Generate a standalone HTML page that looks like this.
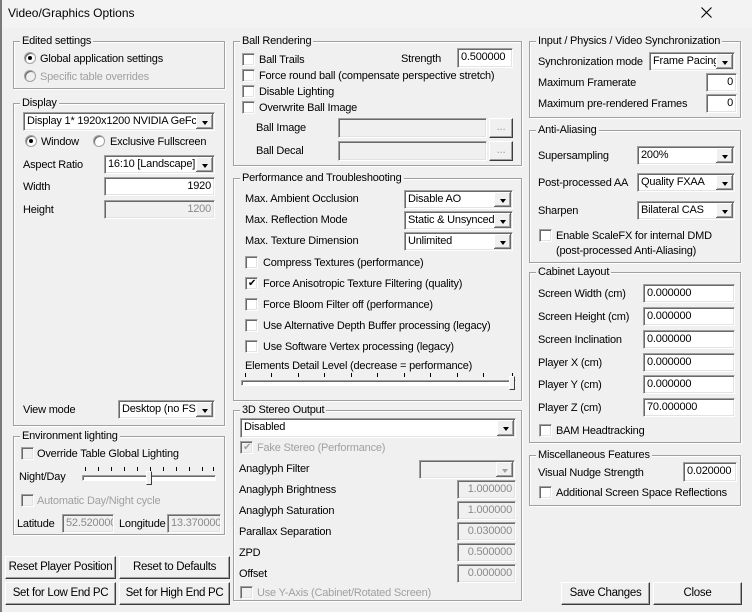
<!DOCTYPE html>
<html><head><meta charset="utf-8"><style>
*{box-sizing:border-box;margin:0;padding:0}
body{width:752px;height:612px;background:#f0f0f0;font-family:"Liberation Sans",sans-serif;font-size:11px;letter-spacing:-0.2px;color:#000;position:relative;overflow:hidden}
#title{position:absolute;left:0;top:0;width:752px;height:28px;background:#f3f3f3}
#title span{position:absolute;left:8px;top:6px;font-size:12px;letter-spacing:0}
#title svg{position:absolute;left:701px;top:7px}
.edge{position:absolute;left:0;top:0;width:2px;height:612px;background:#7a7a7a}
.g{position:absolute;border:1px solid #a0a0a0;box-shadow:inset 1px 1px #fff,1px 1px #fff}
.g>.lg{position:absolute;left:6px;top:-8px;background:#f0f0f0;padding:0 2px;line-height:14px}
.t{position:absolute;line-height:14px;white-space:nowrap;margin-top:1px}
.dis{color:#a0a0a0}
.e{position:absolute;background:#fff;border:1px solid;border-color:#a0a0a0 #fff #fff #a0a0a0;box-shadow:inset 1px 1px #696969,inset -1px -1px #e3e3e3;line-height:17px;text-align:right;padding:0 3px;white-space:nowrap;overflow:hidden}
.e.d{background:#f0f0f0;color:#8a8a8a}
.c{position:absolute;background:#fff;border:1px solid;border-color:#a0a0a0 #fff #fff #a0a0a0;box-shadow:inset 1px 1px #696969,inset -1px -1px #e3e3e3;line-height:17px;padding:0 3px;white-space:nowrap;overflow:hidden}
.c.d{background:#f0f0f0}
.c::after{content:"";position:absolute;right:1px;top:1px;width:16px;bottom:1px;background:#f0f0f0;border-right:1px solid #696969;border-bottom:1px solid #696969;box-shadow:inset 1px 1px #fff,inset -1px -1px #a0a0a0}
.c::before{content:"";position:absolute;right:6px;top:50%;margin-top:-1px;border:3px solid transparent;border-top:4px solid #000;z-index:2}
.c.d::before{border-top-color:#a0a0a0}
.cb{position:absolute;width:13px;height:13px;background:#fff;border:1px solid;border-color:#a0a0a0 #fff #fff #a0a0a0;box-shadow:inset 1px 1px #696969,inset -1px -1px #e3e3e3}
.cb.d{background:#f0f0f0}
.cb i{position:absolute;left:2px;top:0px;font-style:normal;font-size:10px;line-height:11px}
.rd{position:absolute;width:12px;height:12px;border-radius:50%;background:#fff;border:1px solid #a0a0a0;box-shadow:inset 1px 1px #696969}
.rd.on::after{content:"";position:absolute;left:3px;top:3px;width:4px;height:4px;border-radius:50%;background:#000}
.rd.d{background:#f0f0f0}
.b{position:absolute;background:#f0f0f0;border:1px solid;border-color:#fff #3c3c3c #3c3c3c #fff;box-shadow:inset -1px -1px #a0a0a0;text-align:center;line-height:20px;font-size:11.5px;letter-spacing:-0.3px;white-space:nowrap}
.tr{position:absolute;height:6px;background:#fff;border:1px solid;border-color:#a0a0a0 #fff #fff #a0a0a0;box-shadow:inset 1px 1px #696969}
.tk{position:absolute;height:4px;border-left:1px solid #000}
.th{position:absolute;width:6px;height:14px;background:#f0f0f0;border:1px solid;border-color:#fff #3c3c3c #3c3c3c #fff}
</style></head><body>
<div id="title"><span>Video/Graphics Options</span><svg width="11" height="11" viewBox="0 0 11 11"><path d="M0.5 0.5L10.5 10.5M10.5 0.5L0.5 10.5" stroke="#000" stroke-width="1.1"/></svg></div>
<div class="edge"></div>

<div class="g" style="left:13px;top:41px;width:212px;height:48px"><div class="lg">Edited settings</div></div>
<div class="rd on" style="left:24px;top:52px"></div><div class="t" style="left:40px;top:51px">Global application settings</div>
<div class="rd d" style="left:24px;top:70px"></div><div class="t dis" style="left:40px;top:69px">Specific table overrides</div>

<div class="g" style="left:13px;top:103px;width:212px;height:323px"><div class="lg">Display</div></div>
<div class="c" style="left:23px;top:112px;width:192px;height:19px">Display 1* 1920x1200 NVIDIA GeFc</div>
<div class="rd on" style="left:25px;top:135px"></div><div class="t" style="left:41px;top:134px">Window</div>
<div class="rd" style="left:93px;top:135px"></div><div class="t" style="left:110px;top:134px">Exclusive Fullscreen</div>
<div class="t" style="left:23px;top:157px">Aspect Ratio</div>
<div class="c" style="left:104px;top:155px;width:111px;height:19px">16:10 [Landscape]</div>
<div class="t" style="left:23px;top:179px">Width</div>
<div class="e" style="left:104px;top:177px;width:111px;height:19px">1920</div>
<div class="t" style="left:23px;top:202px">Height</div>
<div class="e d" style="left:104px;top:200px;width:111px;height:19px">1200</div>
<div class="t" style="left:23px;top:402px">View mode</div>
<div class="c" style="left:118px;top:400px;width:97px;height:19px">Desktop (no FS</div>

<div class="g" style="left:13px;top:436px;width:212px;height:99px"><div class="lg">Environment lighting</div></div>
<div class="cb d" style="left:21px;top:447px"></div><div class="t" style="left:37px;top:446px">Override Table Global Lighting</div>
<div class="t" style="left:19px;top:469px">Night/Day</div>
<div class="tr" style="left:82px;top:475px;width:134px"></div>
<div class="tk" style="left:85px;top:467px"></div><div class="tk" style="left:98px;top:467px"></div><div class="tk" style="left:111px;top:467px"></div><div class="tk" style="left:124px;top:467px"></div><div class="tk" style="left:137px;top:467px"></div><div class="tk" style="left:150px;top:467px"></div><div class="tk" style="left:163px;top:467px"></div><div class="tk" style="left:176px;top:467px"></div><div class="tk" style="left:189px;top:467px"></div><div class="tk" style="left:202px;top:467px"></div><div class="tk" style="left:213px;top:467px"></div>
<div class="th" style="left:146px;top:471px"></div>
<div class="cb d" style="left:21px;top:494px"></div><div class="t dis" style="left:37px;top:493px">Automatic Day/Night cycle</div>
<div class="t" style="left:17px;top:516px">Latitude</div>
<div class="e d" style="left:62px;top:514px;width:52px;height:19px;text-align:left">52.520000</div>
<div class="t" style="left:119px;top:516px">Longitude</div>
<div class="e d" style="left:167px;top:514px;width:54px;height:19px;text-align:left">13.370000</div>

<div class="b" style="left:5px;top:556px;width:111px;height:23px">Reset Player Position</div>
<div class="b" style="left:119px;top:556px;width:111px;height:23px">Reset to Defaults</div>
<div class="b" style="left:5px;top:582px;width:111px;height:23px">Set for Low End PC</div>
<div class="b" style="left:119px;top:582px;width:111px;height:23px">Set for High End PC</div>

<div class="g" style="left:233px;top:41px;width:289px;height:125px"><div class="lg">Ball Rendering</div></div>
<div class="cb" style="left:242px;top:53px"></div><div class="t" style="left:259px;top:52px">Ball Trails</div>
<div class="t" style="left:401px;top:51px">Strength</div>
<div class="e" style="left:457px;top:48px;width:56px;height:20px;text-align:left">0.500000</div>
<div class="cb" style="left:242px;top:69px"></div><div class="t" style="left:259px;top:68px">Force round ball (compensate perspective stretch)</div>
<div class="cb" style="left:242px;top:85px"></div><div class="t" style="left:259px;top:84px">Disable Lighting</div>
<div class="cb" style="left:242px;top:101px"></div><div class="t" style="left:259px;top:100px">Overwrite Ball Image</div>
<div class="t" style="left:256px;top:120px">Ball Image</div>
<div class="e d" style="left:338px;top:118px;width:149px;height:20px"></div>
<div class="b" style="left:489px;top:118px;width:24px;height:20px;color:#a0a0a0;line-height:16px">...</div>
<div class="t" style="left:256px;top:143px">Ball Decal</div>
<div class="e d" style="left:338px;top:141px;width:149px;height:20px"></div>
<div class="b" style="left:489px;top:141px;width:24px;height:20px;color:#a0a0a0;line-height:16px">...</div>

<div class="g" style="left:233px;top:178px;width:289px;height:223px"><div class="lg">Performance and Troubleshooting</div></div>
<div class="t" style="left:245px;top:191px">Max. Ambient Occlusion</div>
<div class="c" style="left:404px;top:190px;width:109px;height:19px">Disable AO</div>
<div class="t" style="left:245px;top:212px">Max. Reflection Mode</div>
<div class="c" style="left:404px;top:211px;width:109px;height:19px">Static &amp; Unsynced</div>
<div class="t" style="left:245px;top:233px">Max. Texture Dimension</div>
<div class="c" style="left:404px;top:232px;width:109px;height:19px">Unlimited</div>
<div class="cb" style="left:245px;top:256px"></div><div class="t" style="left:263px;top:255px">Compress Textures (performance)</div>
<div class="cb" style="left:245px;top:277px"><i>✔</i></div><div class="t" style="left:263px;top:276px">Force Anisotropic Texture Filtering (quality)</div>
<div class="cb" style="left:245px;top:298px"></div><div class="t" style="left:263px;top:297px">Force Bloom Filter off (performance)</div>
<div class="cb" style="left:245px;top:319px"></div><div class="t" style="left:263px;top:318px">Use Alternative Depth Buffer processing (legacy)</div>
<div class="cb" style="left:245px;top:340px"></div><div class="t" style="left:263px;top:339px">Use Software Vertex processing (legacy)</div>
<div class="t" style="left:245px;top:358px">Elements Detail Level (decrease = performance)</div>
<div class="tr" style="left:241px;top:380px;width:275px"></div>
<div class="tk" style="left:245px;top:373px"></div><div class="tk" style="left:271px;top:373px"></div><div class="tk" style="left:298px;top:373px"></div><div class="tk" style="left:324px;top:373px"></div><div class="tk" style="left:351px;top:373px"></div><div class="tk" style="left:377px;top:373px"></div><div class="tk" style="left:404px;top:373px"></div><div class="tk" style="left:430px;top:373px"></div><div class="tk" style="left:457px;top:373px"></div><div class="tk" style="left:483px;top:373px"></div><div class="tk" style="left:512px;top:373px"></div>
<div class="th" style="left:509px;top:376px"></div>

<div class="g" style="left:233px;top:410px;width:289px;height:191px"><div class="lg">3D Stereo Output</div></div>
<div class="c" style="left:240px;top:418px;width:276px;height:20px">Disabled</div>
<div class="cb d" style="left:240px;top:441px"><i style="color:#a0a0a0">✔</i></div><div class="t dis" style="left:257px;top:440px">Fake Stereo (Performance)</div>
<div class="t" style="left:239px;top:461px">Anaglyph Filter</div>
<div class="c d" style="left:419px;top:460px;width:96px;height:19px"></div>
<div class="t" style="left:239px;top:482px">Anaglyph Brightness</div>
<div class="e d" style="left:457px;top:480px;width:59px;height:19px">1.000000</div>
<div class="t" style="left:239px;top:503px">Anaglyph Saturation</div>
<div class="e d" style="left:457px;top:501px;width:59px;height:19px">1.000000</div>
<div class="t" style="left:239px;top:524px">Parallax Separation</div>
<div class="e d" style="left:457px;top:522px;width:59px;height:19px">0.030000</div>
<div class="t" style="left:239px;top:545px">ZPD</div>
<div class="e d" style="left:457px;top:543px;width:59px;height:19px">0.500000</div>
<div class="t" style="left:239px;top:566px">Offset</div>
<div class="e d" style="left:457px;top:564px;width:59px;height:19px">0.000000</div>
<div class="cb d" style="left:240px;top:586px"></div><div class="t dis" style="left:257px;top:585px">Use Y-Axis (Cabinet/Rotated Screen)</div>

<div class="g" style="left:529px;top:41px;width:212px;height:77px"><div class="lg">Input / Physics / Video Synchronization</div></div>
<div class="t" style="left:538px;top:54px">Synchronization mode</div>
<div class="c" style="left:649px;top:52px;width:86px;height:19px">Frame Pacing</div>
<div class="t" style="left:538px;top:75px">Maximum Framerate</div>
<div class="e" style="left:706px;top:73px;width:31px;height:19px">0</div>
<div class="t" style="left:538px;top:96px">Maximum pre-rendered Frames</div>
<div class="e" style="left:706px;top:94px;width:31px;height:19px">0</div>

<div class="g" style="left:529px;top:130px;width:212px;height:133px"><div class="lg">Anti-Aliasing</div></div>
<div class="t" style="left:538px;top:148px">Supersampling</div>
<div class="c" style="left:637px;top:146px;width:98px;height:19px">200%</div>
<div class="t" style="left:538px;top:175px">Post-processed AA</div>
<div class="c" style="left:637px;top:173px;width:98px;height:19px">Quality FXAA</div>
<div class="t" style="left:538px;top:203px">Sharpen</div>
<div class="c" style="left:637px;top:201px;width:98px;height:19px">Bilateral CAS</div>
<div class="cb" style="left:539px;top:229px"></div><div class="t" style="left:556px;top:228px">Enable ScaleFX for internal DMD</div>
<div class="t" style="left:556px;top:243px">(post-processed Anti-Aliasing)</div>

<div class="g" style="left:529px;top:272px;width:212px;height:171px"><div class="lg">Cabinet Layout</div></div>
<div class="t" style="left:538px;top:286px">Screen Width (cm)</div><div class="e" style="left:643px;top:284px;width:92px;height:19px;text-align:left">0.000000</div>
<div class="t" style="left:538px;top:309px">Screen Height (cm)</div><div class="e" style="left:643px;top:307px;width:92px;height:19px;text-align:left">0.000000</div>
<div class="t" style="left:538px;top:332px">Screen Inclination</div><div class="e" style="left:643px;top:330px;width:92px;height:19px;text-align:left">0.000000</div>
<div class="t" style="left:538px;top:355px">Player X (cm)</div><div class="e" style="left:643px;top:353px;width:92px;height:19px;text-align:left">0.000000</div>
<div class="t" style="left:538px;top:377px">Player Y (cm)</div><div class="e" style="left:643px;top:375px;width:92px;height:19px;text-align:left">0.000000</div>
<div class="t" style="left:538px;top:400px">Player Z (cm)</div><div class="e" style="left:643px;top:398px;width:92px;height:19px;text-align:left">70.000000</div>
<div class="cb" style="left:539px;top:424px"></div><div class="t" style="left:556px;top:423px">BAM Headtracking</div>

<div class="g" style="left:529px;top:455px;width:212px;height:51px"><div class="lg">Miscellaneous Features</div></div>
<div class="t" style="left:538px;top:465px">Visual Nudge Strength</div>
<div class="e" style="left:683px;top:462px;width:54px;height:20px;text-align:left">0.020000</div>
<div class="cb" style="left:539px;top:486px"></div><div class="t" style="left:556px;top:485px">Additional Screen Space Reflections</div>

<div class="b" style="left:561px;top:582px;width:89px;height:23px">Save Changes</div>
<div class="b" style="left:653px;top:582px;width:89px;height:23px">Close</div>
</body></html>
